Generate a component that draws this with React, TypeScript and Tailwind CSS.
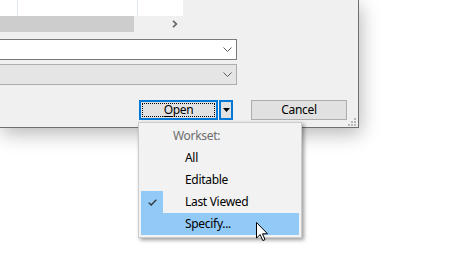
import React from 'react'

const font = { fontFamily: '"Segoe UI", "Noto Sans", sans-serif' }

function Chevron() {
  return (
    <svg width="9" height="5" viewBox="0 0 9 5" className="block">
      <path d="M0.5 0.5 L4.5 4.5 L8.5 0.5" fill="none" stroke="#606060" strokeWidth="1" />
    </svg>
  )
}

function Grip() {
  const dots = [
    [6, 0],
    [3, 3], [6, 3],
    [0, 6], [3, 6], [6, 6],
  ]
  return (
    <svg width="8" height="8" viewBox="0 0 8 8" className="absolute right-[2px] bottom-[1px]">
      {dots.map(([x, y]) => (
        <rect key={`${x}-${y}`} x={x} y={y} width="2" height="2" fill="#b8b8b8" />
      ))}
    </svg>
  )
}

function Cursor() {
  return (
    <svg
      width="13"
      height="20"
      viewBox="0 0 13 20"
      className="absolute left-[256px] top-[222px]"
    >
      <path
        d="M0.5 0.5 L0.5 16 L4.2 12.6 L6.8 18.6 L9 17.6 L6.5 11.8 L11.5 11.8 Z"
        fill="#ffffff"
        stroke="#000000"
        strokeWidth="1"
        strokeLinejoin="miter"
      />
    </svg>
  )
}

function MenuItem({ label, checked, active }: { label: string; checked?: boolean; active?: boolean }) {
  return (
    <div className={`flex h-[22px] items-center ${active ? 'bg-[#91c9f7]' : ''}`}>
      <div
        className={`flex h-full w-[22px] items-center justify-center ${checked ? 'bg-[#91c9f7]' : ''}`}
      >
        {checked && (
          <svg width="9" height="7" viewBox="0 0 9 7">
            <path d="M0.7 3.6 L3.2 6 L8.3 0.8" fill="none" stroke="#333333" strokeWidth="1.3" />
          </svg>
        )}
      </div>
      <span className="pl-[22px] text-black">{label}</span>
    </div>
  )
}

export default function App() {
  return (
    <div
      className="relative h-[278px] w-[451px] overflow-hidden bg-white text-[12px] leading-none tracking-[-0.3px]"
      style={font}
    >
      {/* dialog window */}
      <div className="relative flex h-[128px] w-[359px] flex-col border-r border-b border-[#6e6e6e] bg-[#f0f0f0] shadow-[2px_6px_18px_rgba(0,0,0,0.28)]">
        {/* list view */}
        <div className="flex h-[16px] w-[183px] bg-white">
          <div className="w-[18px] border-r border-[#e3eaf4]" />
          <div className="w-[120px] border-r border-[#e3eaf4]" />
        </div>
        {/* horizontal scrollbar */}
        <div className="flex h-[16px] w-[183px]">
          <div className="w-[134px] bg-[#cdcdcd]" />
          <div className="flex-1" />
          <div className="flex w-[17px] items-center justify-center">
            <svg width="6" height="8" viewBox="0 0 6 8">
              <path d="M1 0.8 L4.4 4 L1 7.2" fill="none" stroke="#606060" strokeWidth="1.6" />
            </svg>
          </div>
        </div>

        {/* combo boxes */}
        <div className="mt-[7px] flex h-[21px] w-[237px] items-center justify-end border border-l-0 border-[#7a7a7a] bg-white pr-[4px]">
          <Chevron />
        </div>
        <div className="mt-[4px] flex h-[21px] w-[237px] items-center justify-end border border-l-0 border-[#adadad] bg-[#e5e5e5] pr-[4px]">
          <Chevron />
        </div>

        {/* buttons */}
        <div className="mt-[15px] flex h-[20px] pl-[139px]">
          <div className="h-[20px] w-[79px] border-2 border-[#0078d7] bg-[#e1e1e1] p-px">
            <div className="flex h-full w-full items-center justify-center border border-dotted border-black">
              <span>
                <span className="underline underline-offset-[2px]">O</span>pen
              </span>
            </div>
          </div>
          <div className="ml-px flex h-[20px] w-[14px] items-center justify-center border-2 border-[#0078d7] bg-[#e1e1e1]">
            <svg width="7" height="4" viewBox="0 0 7 4">
              <path d="M0 0 L7 0 L3.5 4 Z" fill="#000000" />
            </svg>
          </div>
          <div className="ml-[18px] flex h-[20px] w-[96px] items-center justify-center border border-[#adadad] bg-[#e1e1e1]">
            Cancel
          </div>
        </div>

        <Grip />
      </div>

      {/* dropdown menu */}
      <div className="absolute left-[138px] top-[122px] w-[164px] border border-[#cccccc] bg-[#f2f2f2] p-[2px] shadow-[2px_2px_4px_rgba(0,0,0,0.4)]">
        <div className="flex h-[22px] items-center pl-[32px] text-[#6d6d6d]">Workset:</div>
        <MenuItem label="All" />
        <MenuItem label="Editable" />
        <MenuItem label="Last Viewed" checked />
        <MenuItem label="Specify..." active />
      </div>

      <Cursor />
    </div>
  )
}
